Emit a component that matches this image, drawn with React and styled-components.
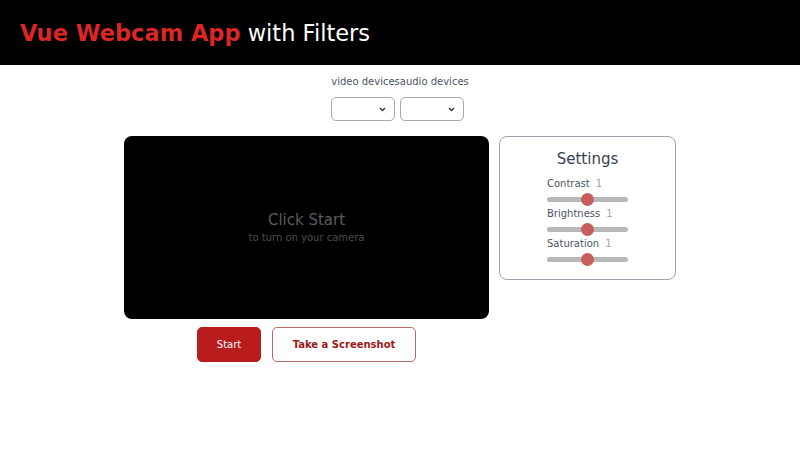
import React from "react";
import styled, { createGlobalStyle } from "styled-components";

const Global = createGlobalStyle`
  body {
    margin: 0;
    font-family: "DejaVu Sans", sans-serif;
    background: #fff;
  }
`;

const Header = styled.header`
  height: 65px;
  background: #000;
  display: flex;
  align-items: center;
  padding: 0 20px;
`;

const Title = styled.h1`
  margin: 0;
  font-size: 22.5px;
  font-weight: normal;
  color: #fff;
  span {
    color: #dc2626;
    font-weight: bold;
  }
`;

const Main = styled.main`
  display: flex;
  flex-direction: column;
  align-items: center;
  padding-top: 11px;
`;

const Devices = styled.div`
  display: flex;
  flex-direction: column;
  align-items: flex-start;
  gap: 9px;
`;

const LabelRow = styled.div`
  font-size: 10px;
  color: #4b5563;
  line-height: 12px;
`;

const SelectRow = styled.div`
  display: flex;
  gap: 5px;
`;

const SelectWrap = styled.div`
  position: relative;
  width: 64px;
  height: 24px;
  svg {
    position: absolute;
    right: 9px;
    top: 10px;
    pointer-events: none;
  }
`;

const Select = styled.select`
  appearance: none;
  -webkit-appearance: none;
  width: 64px;
  height: 24px;
  box-sizing: border-box;
  border: 1px solid #a8a8a8;
  border-radius: 5px;
  background: #fff;
  font-size: 10px;
`;

const Stage = styled.div`
  display: flex;
  gap: 10px;
  margin-top: 15px;
  align-items: flex-start;
`;

const VideoCol = styled.div`
  display: flex;
  flex-direction: column;
  align-items: center;
  gap: 8px;
`;

const Screen = styled.div`
  width: 365px;
  height: 183px;
  background: #000;
  border-radius: 8px;
  display: flex;
  flex-direction: column;
  align-items: center;
  justify-content: center;
  padding-top: 2px;
  box-sizing: border-box;
`;

const Big = styled.div`
  font-size: 15px;
  line-height: 18px;
  color: #5c5c5c;
`;

const Small = styled.div`
  font-size: 10px;
  line-height: 18px;
  color: #4d4d4d;
`;

const Buttons = styled.div`
  display: flex;
  gap: 11px;
`;

const Button = styled.button`
  height: 35px;
  width: ${(p) => p.$w}px;
  box-sizing: border-box;
  border-radius: 5px;
  font-family: "DejaVu Sans", sans-serif;
  font-size: 10px;
  font-weight: ${(p) => (p.$primary ? "normal" : "bold")};
  background: ${(p) => (p.$primary ? "#b91c1c" : "#fff")};
  color: ${(p) => (p.$primary ? "#fff" : "#991b1b")};
  border: 1px solid ${(p) => (p.$primary ? "#b91c1c" : "#b86a6a")};
  cursor: pointer;
`;

const Card = styled.div`
  width: 177px;
  height: 144px;
  box-sizing: border-box;
  border: 1px solid #9ca3af;
  border-radius: 8px;
  display: flex;
  flex-direction: column;
  align-items: center;
  padding-top: 12px;
`;

const CardTitle = styled.h2`
  margin: 0 0 8px;
  font-size: 15px;
  font-weight: normal;
  color: #374151;
  line-height: 20px;
`;

const Control = styled.div`
  width: 81px;
  display: flex;
  flex-direction: column;
`;

const ControlLabel = styled.label`
  font-size: 10px;
  color: #4b5563;
  line-height: 13px;
  margin-bottom: 1px;
  white-space: nowrap;
  span {
    color: #a3a3a3;
    margin-left: 6px;
  }
`;

const Range = styled.input`
  -webkit-appearance: none;
  appearance: none;
  width: 81px;
  height: 16px;
  margin: 0;
  background: transparent;
  &::-webkit-slider-runnable-track {
    height: 5px;
    background: #b8b8b8;
    border-radius: 3px;
  }
  &::-webkit-slider-thumb {
    -webkit-appearance: none;
    width: 13px;
    height: 13px;
    border-radius: 50%;
    background: #c75e5e;
    margin-top: -4px;
  }
`;

const Chevron = () => (
  <svg width="7" height="5" viewBox="0 0 7 5">
    <path d="M1 1l2.5 2.5L6 1" fill="none" stroke="#333" strokeWidth="1.4" />
  </svg>
);

const settings = ["Contrast", "Brightness", "Saturation"];

export default function App() {
  return (
    <>
      <Global />
      <Header>
        <Title>
          <span>Vue Webcam App</span> with Filters
        </Title>
      </Header>
      <Main>
        <Devices>
          <LabelRow>
            <label>video devices</label>
            <label>audio devices</label>
          </LabelRow>
          <SelectRow>
            <SelectWrap>
              <Select />
              <Chevron />
            </SelectWrap>
            <SelectWrap>
              <Select />
              <Chevron />
            </SelectWrap>
          </SelectRow>
        </Devices>
        <Stage>
          <VideoCol>
            <Screen>
              <Big>Click Start</Big>
              <Small>to turn on your camera</Small>
            </Screen>
            <Buttons>
              <Button $primary $w={64}>Start</Button>
              <Button $w={144}>Take a Screenshot</Button>
            </Buttons>
          </VideoCol>
          <Card>
            <CardTitle>Settings</CardTitle>
            {settings.map((s) => (
              <Control key={s}>
                <ControlLabel>
                  {s}
                  <span>1</span>
                </ControlLabel>
                <Range type="range" min="0" max="2" step="0.1" defaultValue="1" />
              </Control>
            ))}
          </Card>
        </Stage>
      </Main>
    </>
  );
}
